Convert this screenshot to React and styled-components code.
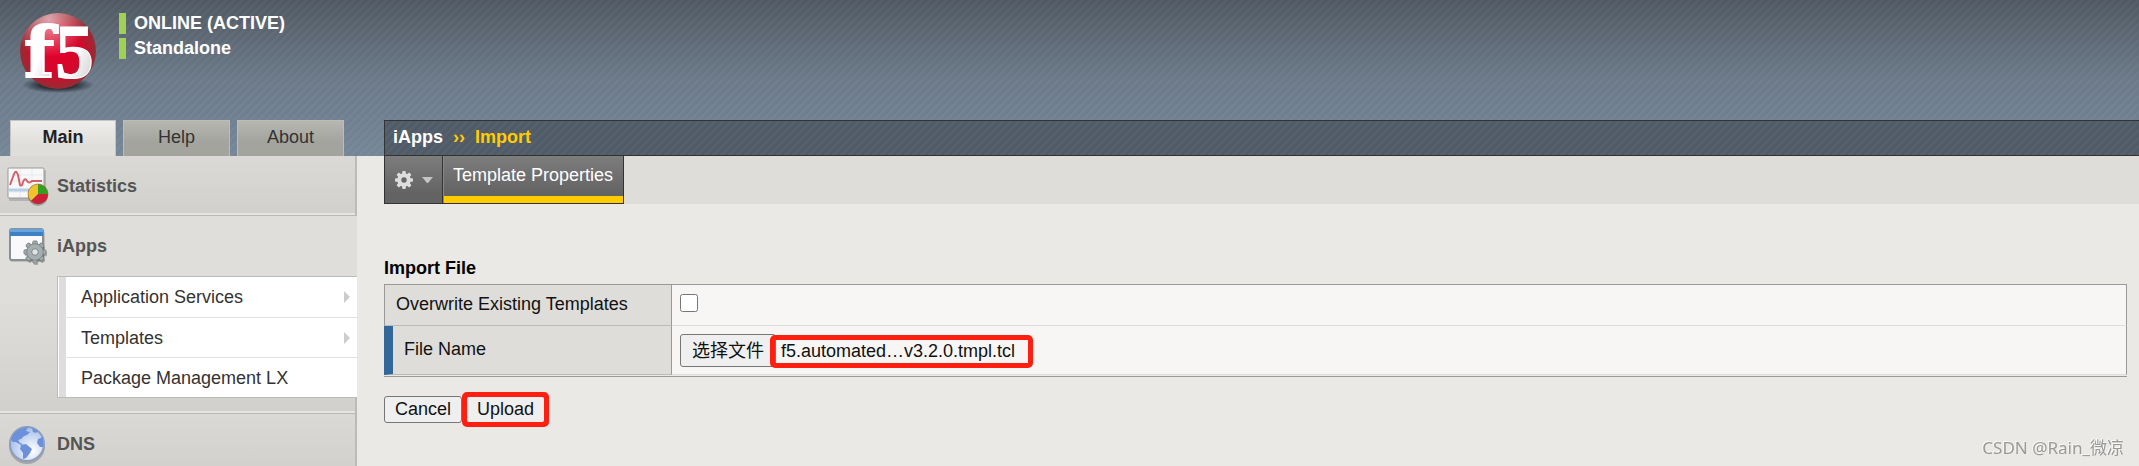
import React, { useRef, useState } from 'react'
import styled, { createGlobalStyle, css } from 'styled-components'

const GlobalStyle = createGlobalStyle`
  * {
    box-sizing: border-box;
  }
  body {
    margin: 0;
    background: #eae9e5;
    color: #111;
    font-family: "Liberation Sans", Arial, "Noto Sans CJK SC", sans-serif;
    font-size: 18px;
    line-height: 20px;
  }
  button {
    font: inherit;
    color: inherit;
    cursor: pointer;
  }
`

const stripes = css`
  linear-gradient(
    135deg,
    rgba(255, 255, 255, 0.03) 25%,
    transparent 25% 50%,
    rgba(255, 255, 255, 0.03) 50% 75%,
    transparent 75%
  ) 0 0 / 8px 8px
`

const Page = styled.div`
  height: 100vh;
  overflow: hidden;
`

const Header = styled.header`
  background: ${stripes}, linear-gradient(#505963, #6b7988 50%, #758698);
`

const Brand = styled.div`
  display: flex;
  gap: 21px;
  height: 120px;
  padding: 13px 18px;
`

const LogoSvg = styled.svg`
  overflow: visible;
`

const Status = styled.div`
  display: flex;
  flex-direction: column;
  gap: 4px;
`

const StatusLine = styled.div`
  height: 21px;
  padding-left: 8px;
  border-left: 7px solid #a1d057;
  color: #fff;
  font-weight: bold;
`

const HeaderBar = styled.div`
  display: grid;
  grid-template-columns: 384px 1fr;
  height: 36px;
`

const Tabs = styled.nav`
  display: flex;
  gap: 7px;
  padding-left: 10px;
`

const Tab = styled.button`
  width: 107px;
  padding: 0 0 4px;
  border: 1px solid #bcbcb9;
  border-bottom: 0;
  color: #333;
  background: linear-gradient(#b7b7b2, #a3a49e 60%);
  ${({ $active }) => $active && css`
    width: 106px;
    border-color: #c4c4c1;
    color: #222;
    font-weight: bold;
    background: linear-gradient(#efeeed, #dfdeda 70%);
  `}
`

const Breadcrumb = styled.div`
  display: flex;
  align-items: center;
  gap: 10px;
  padding: 0 8px 2px;
  border: 1px solid #333;
  border-right: 0;
  background: ${stripes}, #4f5b67;
  color: #fff;
  font-weight: bold;
`

const Crumb = styled.span`
  color: #fc0;
`

const Body = styled.div`
  display: grid;
  grid-template-columns: 357px 1fr;
  gap: 27px;
`

const Sidebar = styled.aside`
  font-weight: bold;
  color: #555;
`

const NavHeading = styled.a`
  display: flex;
  align-items: center;
  gap: 7px;
  height: 60px;
  padding-left: 6px;
  color: #555;
  text-decoration: none;
`

const Section = styled.div`
  background: linear-gradient(#dad9d5, #d1d0cc);
  border-right: 2px solid #bbb;
  border-bottom: 1px solid #b9b9b9;
  box-shadow: inset 0 -2px #e6e5e2;
  height: ${({ $open }) => ($open ? 'auto' : '60px')};
  ${({ $open }) => $open && css`
    background: linear-gradient(#dfdeda 40%, #d1d0cc);
    border-right: 0;
  `}
`

const SectionEdge = styled.div`
  height: 15px;
  border-right: 2px solid #bbb;
`

const SubMenu = styled.ul`
  margin: 0 0 0 57px;
  padding: 0 0 0 1px;
  list-style: none;
  font-weight: normal;
  background: #fff;
  border: 1px solid #bbb;
  border-right: 0;
`

const SubMenuItem = styled.li`
  height: 40px;
  border-left: 7px solid #ddd;
  & + & {
    border-top: 1px solid #e2e2e2;
  }
`

const SubMenuLink = styled.a`
  display: flex;
  align-items: center;
  justify-content: space-between;
  height: 100%;
  padding: 0 7px 0 15px;
  color: #333;
  text-decoration: none;
`

const Main = styled.main`
  min-width: 0;
`

const Toolbar = styled.div`
  display: flex;
  height: 48px;
  background: #dedddA;
`

const ToolButton = styled.button`
  display: flex;
  align-items: center;
  gap: 8px;
  width: 59px;
  padding: 0 8px 0 9px;
  border: 1px solid #333;
  border-top: 0;
  background: linear-gradient(#7d7d7d, #636363 80%);
`

const ToolTab = styled.button`
  padding: 0 10px 9px;
  border: 1px solid #333;
  border-width: 0 1px 1px 0;
  color: #fff;
  background: linear-gradient(#7d7d7d, #636363 80%);
  box-shadow: inset 1px 0 #888, inset 0 -7px #fc0;
`

const Form = styled.form`
  padding: 54px 12px 0 0;
`

const Title = styled.h1`
  margin: 0 0 6px;
  font-size: 18px;
  line-height: 20px;
  color: #000;
`

const Table = styled.table`
  width: 100%;
  border-spacing: 0;
  border-top: 1px solid #999;
  border-bottom: 1px solid #999;
  padding-bottom: 1px;
`

const Label = styled.th`
  width: 288px;
  height: ${({ $height }) => $height}px;
  padding: 0 0 2px 11px;
  text-align: left;
  font-weight: normal;
  background: #dedddA;
  border: 1px solid #999;
  border-width: 0 1px 0 1px;
  border-bottom: 1px solid #bbb;
  ${({ $required }) => $required && css`
    border-left: 9px solid #369;
  `}
`

const Value = styled.td`
  padding: 0 8px;
  background: #f7f6f4;
  border-right: 1px solid #999;
  border-bottom: 1px solid #ddd;
`

const Checkbox = styled.input`
  display: block;
  width: 18px;
  height: 18px;
  margin: 0 0 5px;
`

const FilePicker = styled.div`
  display: flex;
  align-items: center;
`

const Button = styled.button`
  height: 27px;
  padding: 0 10px 2px;
  border: 1px solid #767676;
  border-radius: 3px;
  background: #efefef;
  color: #111;
`

const FileButton = styled(Button)`
  height: 33px;
  padding: 1px 11px 0;
`

const Actions = styled.div`
  display: flex;
  gap: 4px;
  margin-top: 19px;
`

const Marked = styled.span`
  position: relative;
  display: inline-flex;
  &::after {
    content: "";
    position: absolute;
    inset: ${({ $inset }) => $inset};
    border: 5px solid #ff1f10;
    border-radius: 5px;
    pointer-events: none;
  }
`

const FileName = styled.span`
  padding: 2px 18px 0 5px;
`

const Watermark = styled.div`
  position: fixed;
  right: 15px;
  bottom: 8px;
  color: #999;
  font-family: "Noto Sans", "Noto Sans CJK SC", sans-serif;
  font-size: 17px;
  text-shadow: -1px -1px #f8f8f6;
`

const Logo = () => (
  <LogoSvg width="80" height="82" viewBox="0 0 80 82" aria-label="f5">
    <defs>
      <radialGradient id="ball" cx="50%" cy="50%" r="52%">
        <stop offset="0" stopColor="#e4002b" />
        <stop offset=".6" stopColor="#d20a2c" />
        <stop offset="1" stopColor="#8f3034" />
      </radialGradient>
      <radialGradient id="shine" cx="38%" cy="8%" r="50%">
        <stop offset="0" stopColor="#fff" stopOpacity=".6" />
        <stop offset="1" stopColor="#fff" stopOpacity="0" />
      </radialGradient>
      <radialGradient id="under">
        <stop offset="0" stopColor="#1c222a" />
        <stop offset=".5" stopColor="#1c222a" stopOpacity=".8" />
        <stop offset="1" stopColor="#1c222a" stopOpacity="0" />
      </radialGradient>
      <linearGradient id="glyph" x2="1" y2="1">
        <stop offset=".5" stopColor="#fff" />
        <stop offset="1" stopColor="#c4c4c6" />
      </linearGradient>
    </defs>
    <ellipse cx="40" cy="72" rx="36" ry="8" fill="url(#under)" />
    <circle cx="40" cy="38" r="38" fill="url(#ball)" />
    <circle cx="40" cy="38" r="38" fill="url(#shine)" />
    <g fill="url(#glyph)" stroke="#fff" fontWeight="bold">
      <text x="6" y="64" fontSize="70" strokeWidth="2" fontFamily="DejaVu Serif, serif">f</text>
      <text x="37" y="65" fontSize="78" strokeWidth="1" fontFamily="Liberation Serif, serif">5</text>
    </g>
  </LogoSvg>
)

const gearTeeth = [0, 45, 90, 135, 180, 225, 270, 315]

const Gear = ({ cx, cy, r, fill, hole, stroke }) => (
  <g transform={`translate(${cx} ${cy})`} fill={fill} stroke={stroke}>
    {gearTeeth.map((angle) => (
      <rect
        key={angle}
        x={-r * 0.2}
        y={-r}
        width={r * 0.4}
        height={r * 0.5}
        rx="1"
        transform={`rotate(${angle})`}
      />
    ))}
    <circle r={r * 0.75} />
    <circle r={r * 0.5} stroke="none" />
    <circle r={r * 0.3} fill={hole} />
  </g>
)

const StatisticsIcon = () => (
  <svg width="44" height="42" viewBox="0 0 44 42">
    <rect x="3" y="5" width="37" height="31" rx="1" fill="#777" opacity=".35" />
    <rect x="2" y="3" width="36" height="30" rx="1" fill="#f8f8f9" stroke="#999" />
    <path d="M4 10H37M4 16H37M4 27H37M14 4V32M26 4V32" stroke="#e6e9ee" />
    <path d="M3 25H28" stroke="#b5cfea" strokeWidth="3" />
    <path
      d="M4 20 8 9Q10 4 12 10L14 20Q16 22 17 17 19 12 21 16 23 19 26 16H36"
      fill="none"
      stroke="#d4616b"
      strokeWidth="2"
    />
    <circle cx="32" cy="31" r="10" fill="#555" opacity=".4" />
    <path d="M32 29V19A10 10 0 0 0 25 36Z" fill="#f0c22c" />
    <path d="M32 29V19A10 10 0 0 1 42 29Z" fill="#35a01f" />
    <path d="M32 29H42A10 10 0 0 1 25 36Z" fill="#ce1f38" />
    <circle cx="32" cy="29" r="10" fill="none" stroke="#7b4a20" strokeOpacity=".5" />
  </svg>
)

const AppsIcon = () => (
  <svg width="44" height="42" viewBox="0 0 44 42">
    <rect x="4" y="6" width="35" height="31" rx="2" fill="#777" opacity=".3" />
    <rect x="4" y="4" width="33" height="31" rx="2" fill="#f9f9fb" stroke="#8a8f94" strokeWidth="2" />
    <rect x="4" y="4" width="33" height="7" fill="#3f7fc4" />
    <rect x="4" y="4" width="33" height="3" fill="#68a3dc" />
    <g opacity=".3">
      <Gear cx={30} cy={29} r={11} fill="#333" hole="#333" />
    </g>
    <Gear cx={29} cy={27} r={11} fill="#a5afb0" hole="#dfe3e3" stroke="#7d8788" />
  </svg>
)

const GlobeIcon = () => (
  <svg width="44" height="42" viewBox="0 0 44 42">
    <defs>
      <radialGradient id="sea" cx="65%" cy="70%" r="75%">
        <stop offset="0" stopColor="#fff" />
        <stop offset="1" stopColor="#9db9ec" />
      </radialGradient>
    </defs>
    <circle cx="21" cy="23" r="18" fill="#555" opacity=".35" />
    <circle cx="21" cy="21" r="17" fill="url(#sea)" stroke="#8d9fbd" strokeWidth="2" />
    <path
      d="M5 17Q7 9 14 6L22 4 20 8 24 9 21 12 18 13 15 16 12 17 14 20 17 21 15 22 10 19 7 19ZM26 5 32 8 30 10 27 9ZM15 22 20 21 26 26 24 30 20 35 17 36 17 30 14 26ZM32 16 37 14 37 24 34 24 31 20Z"
      fill="#6c90da"
    />
  </svg>
)

const Arrow = () => (
  <svg width="6" height="12" viewBox="0 0 6 12">
    <path d="M0 0 6 6 0 12Z" fill="#ccc" />
  </svg>
)

const subMenu = [
  { name: 'Application Services', nested: true },
  { name: 'Templates', nested: true },
  { name: 'Package Management LX', nested: false },
]

const App = () => {
  const fileInput = useRef(null)
  const [overwrite, setOverwrite] = useState(false)
  const [fileName, setFileName] = useState('f5.automated…v3.2.0.tmpl.tcl')

  const onFileChange = (event) => {
    const file = event.target.files[0]
    if (file) setFileName(file.name)
  }

  return (
    <Page>
      <GlobalStyle />
      <Header>
        <Brand>
          <Logo />
          <Status>
            <StatusLine>ONLINE (ACTIVE)</StatusLine>
            <StatusLine>Standalone</StatusLine>
          </Status>
        </Brand>
        <HeaderBar>
          <Tabs>
            <Tab type="button" $active>Main</Tab>
            <Tab type="button">Help</Tab>
            <Tab type="button">About</Tab>
          </Tabs>
          <Breadcrumb>
            <span>iApps</span>
            <Crumb>››</Crumb>
            <Crumb>Import</Crumb>
          </Breadcrumb>
        </HeaderBar>
      </Header>
      <Body>
        <Sidebar>
          <Section>
            <NavHeading href="#statistics"><StatisticsIcon />Statistics</NavHeading>
          </Section>
          <Section $open>
            <NavHeading href="#iapps"><AppsIcon />iApps</NavHeading>
            <SubMenu>
              {subMenu.map((item) => (
                <SubMenuItem key={item.name}>
                  <SubMenuLink href="#iapps">
                    {item.name}
                    {item.nested && <Arrow />}
                  </SubMenuLink>
                </SubMenuItem>
              ))}
            </SubMenu>
            <SectionEdge />
          </Section>
          <Section>
            <NavHeading href="#dns"><GlobeIcon />DNS</NavHeading>
          </Section>
        </Sidebar>
        <Main>
          <Toolbar>
            <ToolButton type="button" aria-label="Options">
              <svg width="20" height="20" viewBox="0 0 20 20">
                <Gear cx={10} cy={10} r={9} fill="#ddd" hole="#666" />
              </svg>
              <svg width="11" height="6" viewBox="0 0 11 6">
                <path d="M0 0H11L6 6H5Z" fill="#c4c4c4" />
              </svg>
            </ToolButton>
            <ToolTab type="button">Template Properties</ToolTab>
          </Toolbar>
          <Form onSubmit={(event) => event.preventDefault()}>
            <Title>Import File</Title>
            <Table>
              <tbody>
                <tr>
                  <Label $height={41}><label htmlFor="overwrite">Overwrite Existing Templates</label></Label>
                  <Value>
                    <Checkbox
                      id="overwrite"
                      type="checkbox"
                      checked={overwrite}
                      onChange={(event) => setOverwrite(event.target.checked)}
                    />
                  </Value>
                </tr>
                <tr>
                  <Label $height={49} $required><label htmlFor="file">File Name</label></Label>
                  <Value>
                    <FilePicker>
                      <input id="file" type="file" hidden ref={fileInput} onChange={onFileChange} />
                      <FileButton type="button" onClick={() => fileInput.current.click()}>选择文件</FileButton>
                      <Marked $inset="-4px 0 -7px -6px">
                        <FileName>{fileName}</FileName>
                      </Marked>
                    </FilePicker>
                  </Value>
                </tr>
              </tbody>
            </Table>
            <Actions>
              <Button type="button">Cancel</Button>
              <Marked $inset="-4px -4px">
                <Button type="submit">Upload</Button>
              </Marked>
            </Actions>
          </Form>
        </Main>
      </Body>
      <Watermark>CSDN @Rain_微凉</Watermark>
    </Page>
  )
}

export default App
